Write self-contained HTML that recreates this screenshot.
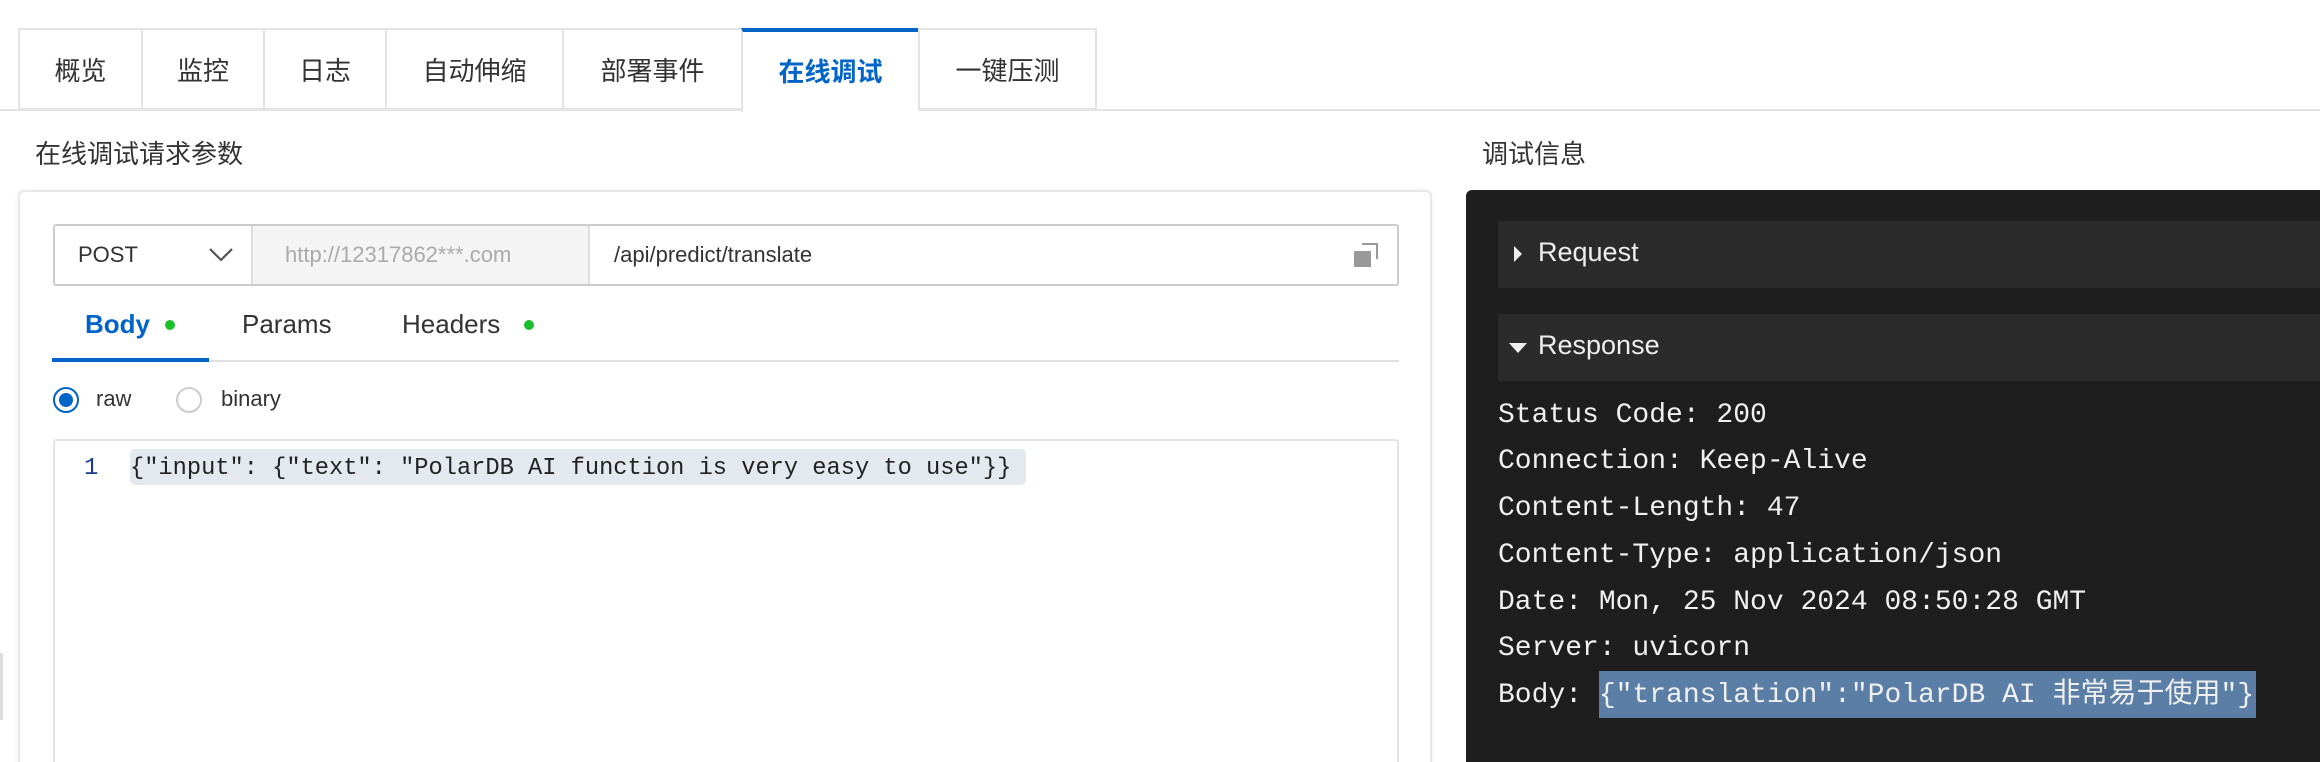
<!DOCTYPE html>
<html style="height:762px;overflow:hidden"><head><meta charset="utf-8"><style>
*{box-sizing:border-box;margin:0;padding:0}
html,body{width:2320px;height:762px;overflow:hidden;background:#fff}
body{font-family:"Liberation Sans","Noto Sans CJK SC",sans-serif;color:#333}
#w{position:relative;width:2320px;height:762px;overflow:hidden}
.a{position:absolute}
.tab{position:absolute;top:28px;height:82px;border:2px solid #e4e4e4;border-right:none;font-size:26px;display:flex;align-items:center;justify-content:center;color:#333;background:#fff}
.mono{font-family:"Liberation Mono","Noto Sans CJK SC",monospace}
.dl{position:absolute;left:1498px;font-size:28px;color:#f0f0f0;line-height:46px;white-space:pre}
</style></head><body><div id="w">
<div class="a" style="left:0;top:109px;width:2320px;height:2px;background:#e4e4e4"></div>
<div class="tab" style="left:18px;width:123px">概览</div>
<div class="tab" style="left:141px;width:122px">监控</div>
<div class="tab" style="left:263px;width:122px">日志</div>
<div class="tab" style="left:385px;width:177px">自动伸缩</div>
<div class="tab" style="left:562px;width:179px">部署事件</div>
<div class="tab" style="left:741px;width:177px;border-top:4px solid #0064c8;border-bottom:none;height:84px;color:#0064c8;font-weight:bold;padding-bottom:4px">在线调试</div>
<div class="tab" style="left:918px;width:179px;border-right:2px solid #e4e4e4">一键压测</div>

<div class="a" style="left:35px;top:134px;font-size:26px;color:#333">在线调试请求参数</div>
<div class="a" style="left:1482px;top:134px;font-size:26px;color:#333">调试信息</div>

<div class="a" style="left:18px;top:190px;width:1414px;height:600px;border:2px solid #e8e8e8;border-radius:6px;box-shadow:0 0 6px rgba(0,0,0,.06);background:#fff"></div>
<div class="a" style="left:0;top:653px;width:3px;height:67px;background:#ddd"></div>

<div class="a" style="left:53px;top:224px;width:1346px;height:62px;border:2px solid #ccc;border-radius:3px"></div>
<div class="a" style="left:55px;top:226px;width:196px;height:58px;font-size:22px;color:#333;display:flex;align-items:center;padding-left:23px">POST</div>
<svg class="a" style="left:208px;top:245px" width="26" height="18"><path d="M2 4 L13 15 L24 4" fill="none" stroke="#555" stroke-width="2.2"/></svg>
<div class="a" style="left:251px;top:226px;width:339px;height:58px;background:#f4f4f4;border-left:2px solid #ddd;border-right:2px solid #ddd;font-size:22px;color:#aaa;display:flex;align-items:center;padding-left:32px">http://12317862***.com</div>
<div class="a" style="left:614px;top:226px;height:58px;font-size:22px;color:#333;display:flex;align-items:center">/api/predict/translate</div>
<div class="a" style="left:1362px;top:243px;width:16px;height:16px;border-top:2px solid #999;border-right:2px solid #999"></div>
<div class="a" style="left:1354px;top:251px;width:17px;height:16px;background:#999"></div>

<div class="a" style="left:85px;top:309px;font-size:26px;color:#0064c8;font-weight:bold">Body</div>
<div class="a" style="left:165px;top:320px;width:10px;height:10px;border-radius:50%;background:#1bbf2c"></div>
<div class="a" style="left:242px;top:309px;font-size:26px;color:#333">Params</div>
<div class="a" style="left:402px;top:309px;font-size:26px;color:#333">Headers</div>
<div class="a" style="left:524px;top:320px;width:10px;height:10px;border-radius:50%;background:#1bbf2c"></div>
<div class="a" style="left:52px;top:360px;width:1347px;height:2px;background:#e0e0e0"></div>
<div class="a" style="left:52px;top:358px;width:157px;height:4px;background:#0064c8"></div>

<div class="a" style="left:53px;top:387px;width:26px;height:26px;border:2px solid #0064c8;border-radius:50%"></div>
<div class="a" style="left:59px;top:393px;width:14px;height:14px;background:#0064c8;border-radius:50%"></div>
<div class="a" style="left:96px;top:386px;font-size:22px;color:#333">raw</div>
<div class="a" style="left:176px;top:387px;width:26px;height:26px;border:2px solid #ccc;border-radius:50%"></div>
<div class="a" style="left:221px;top:386px;font-size:22px;color:#333">binary</div>

<div class="a" style="left:53px;top:439px;width:1346px;height:340px;border:2px solid #e4e4e4;border-radius:3px;background:#fff"></div>
<div class="a mono" style="left:84px;top:455px;font-size:24px;color:#1a3d8f">1</div>
<div class="a" style="left:130px;top:449px;width:896px;height:36px;background:#e4e8ef;border-radius:5px"></div>
<div class="a mono" style="left:130px;top:455px;font-size:23.7px;color:#222;white-space:pre">{"input": {"text": "PolarDB AI function is very easy to use"}}</div>

<div class="a" style="left:1466px;top:190px;width:854px;height:600px;background:#1e1e1e;border-radius:6px 0 0 0"></div>
<div class="a" style="left:1498px;top:221px;width:822px;height:67px;background:#2b2b2b"></div>
<div class="a" style="left:1498px;top:314px;width:822px;height:67px;background:#2b2b2b"></div>
<svg class="a" style="left:1512px;top:244px" width="12" height="20"><path d="M2 2 L10 10 L2 18Z" fill="#eee"/></svg>
<svg class="a" style="left:1508px;top:342px" width="20" height="12"><path d="M1 1 L19 1 L10 11Z" fill="#eee"/></svg>
<div class="a" style="left:1538px;top:237px;font-size:27px;color:#eee">Request</div>
<div class="a" style="left:1538px;top:330px;font-size:27px;color:#eee">Response</div>
<div class="a" style="left:1599px;top:671px;width:657px;height:47px;background:#5a7ea5"></div>
<div class="dl mono" style="top:393px">Status Code: 200</div>
<div class="dl mono" style="top:439px">Connection: Keep-Alive</div>
<div class="dl mono" style="top:486px">Content-Length: 47</div>
<div class="dl mono" style="top:533px">Content-Type: application/json</div>
<div class="dl mono" style="top:580px">Date: Mon, 25 Nov 2024 08:50:28 GMT</div>
<div class="dl mono" style="top:626px">Server: uvicorn</div>
<div class="dl mono" style="top:673px">Body: {"translation":"PolarDB AI 非常易于使用"}</div>
</div></body></html>
